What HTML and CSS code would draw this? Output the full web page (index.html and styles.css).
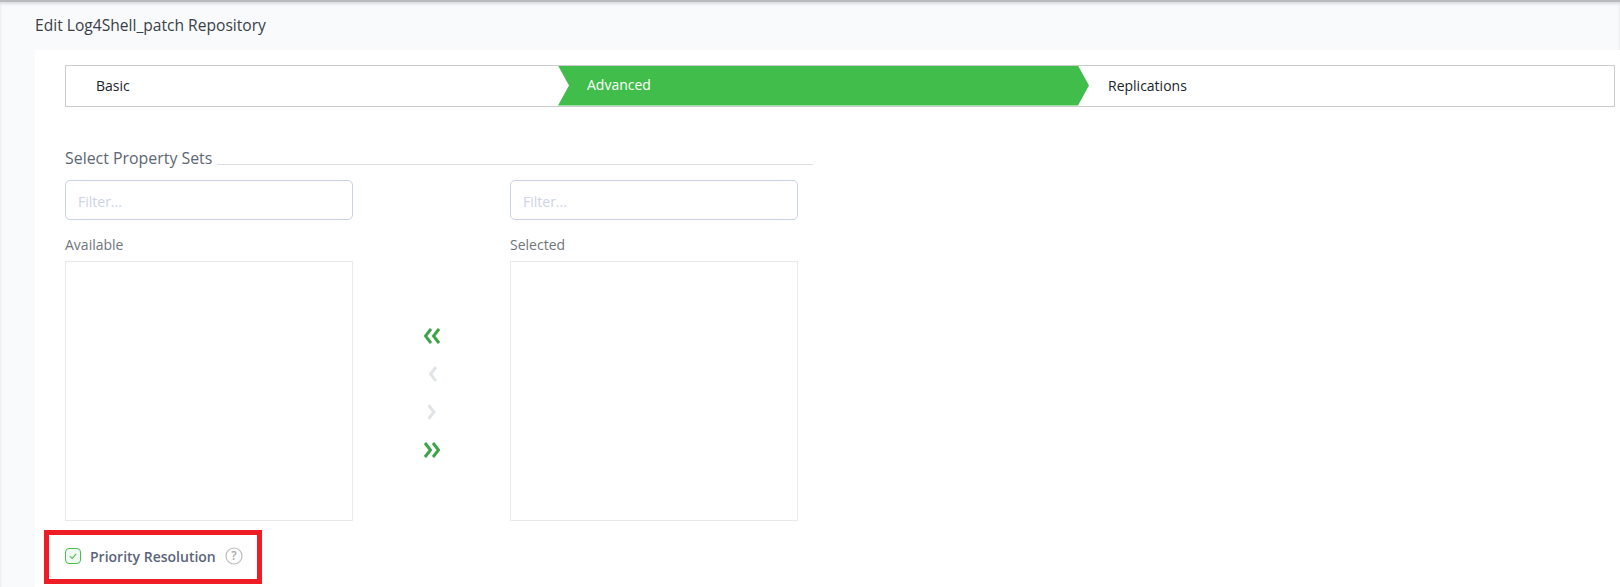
FILE: index.html
```html
<!DOCTYPE html>
<html lang="en">
<head>
<meta charset="utf-8">
<title>Edit Log4Shell_patch Repository</title>
<link rel="stylesheet" href="styles.css">
</head>
<body>
<div class="page">
  <h1 class="page-title">Edit Log4Shell_patch Repository</h1>
  <main class="panel">
    <div class="stepper">
      <div class="step step-first">Basic</div>
      <div class="step step-active">Advanced</div>
      <div class="step step-last">Replications</div>
    </div>
    <section class="property-sets">
      <div class="legend"><span class="legend-text">Select Property Sets</span><span class="legend-line"></span></div>
      <div class="picker">
        <div class="picker-col">
          <input class="filter" type="text" placeholder="Filter...">
          <div class="list-label">Available</div>
          <div class="list-box"></div>
        </div>
        <div class="arrows">
          <svg class="arrow" viewBox="0 0 16 16" width="16" height="16"><path class="on" d="M7 1 1.5 8 7 15M15 1 9.500 8 15 15"/></svg>
          <svg class="arrow" viewBox="0 0 16 16" width="16" height="16"><path class="off" d="M12 1 6.500 8 12 15"/></svg>
          <svg class="arrow" viewBox="0 0 16 16" width="16" height="16"><path class="off" d="M4.500 1 10 8 4.500 15"/></svg>
          <svg class="arrow" viewBox="0 0 16 16" width="16" height="16"><path class="on" d="M1 1 6.500 8 1 15M9 1 14.500 8 9 15"/></svg>
        </div>
        <div class="picker-col">
          <input class="filter" type="text" placeholder="Filter...">
          <div class="list-label">Selected</div>
          <div class="list-box"></div>
        </div>
      </div>
    </section>
    <div class="priority">
      <span class="checkbox"><svg viewBox="0 0 16 16" width="16" height="16"><path d="M4.8 8.2 7.2 10.4 11.2 5.8"/></svg></span>
      <span class="priority-label">Priority Resolution</span>
      <svg class="help" viewBox="0 0 18 18" width="18" height="18"><circle cx="9" cy="9" r="8"/><text x="9" y="13" text-anchor="middle">?</text></svg>
    </div>
    <div class="annotation"></div>
  </main>
</div>
</body>
</html>
```
FILE: styles.css
```css
* { box-sizing: border-box; }
html, body { margin: 0; height: 587px; overflow: hidden; }
body {
  background: #f9fafc;
  font-family: "Open Sans", "Liberation Sans", sans-serif;
  border-top: 2px solid #b8babe;
}
.page {
  padding-left: 35px;
  height: 585px;
  display: flex;
  flex-direction: column;
  box-shadow: inset 0 2px 3px rgba(0, 0, 0, 0.12);
}
.page-title {
  margin: 0;
  height: 48px;
  padding-top: 13px;
  font-size: 15.6px;
  line-height: 20px;
  font-weight: 400;
  color: #3a3f47;
}
.panel {
  position: relative;
  flex: 1;
  background: #fff;
  padding: 15px 5px 0 30px;
}
.stepper {
  display: flex;
  height: 42px;
  border: 1.5px solid #cccccc;
  font-size: 14px;
  color: #20242a;
}
.step { display: flex; align-items: center; padding-bottom: 2px; }
.step-first { width: 492px; padding-left: 30px; }
.step-active {
  width: 531px;
  padding-left: 29px;
  color: #fff;
  background: #40bd4a;
  clip-path: polygon(0 0, 520px 0, 100% 50%, 520px 100%, 0 100%, 11px 50%);
  height: 40px;
  align-self: flex-start;
  margin-top: -0.5px;
}
.step-last { flex: 1; padding-left: 19px; }
.property-sets { width: 748px; margin-top: 39px; }
.legend { display: flex; align-items: flex-end; height: 24px; }
.legend-text { font-size: 15.9px; line-height: 24px; color: #5d6673; }
.legend-line { flex: 1; margin: 0 0 5px 5px; border-bottom: 1px solid #dcdee4; }
.picker { display: grid; grid-template-columns: 288px 157px 288px; margin-top: 10px; }
.picker-col { display: flex; flex-direction: column; }
.filter {
  width: 100%;
  height: 40px;
  padding: 2px 12px 0;
  border: 1px solid #c9d1e4;
  border-radius: 5px;
  outline: none;
  background: #fff;
  font: 14px "Open Sans", "Liberation Sans", sans-serif;
}
.filter::placeholder { color: #ccd3e6; opacity: 1; }
.list-label { height: 41px; padding-top: 15px; font-size: 14px; line-height: 20px; color: #70757c; }
.list-box { height: 260px; border: 1px solid #e8e9ec; background: #fff; }
.arrows {
  display: flex;
  flex-direction: column;
  align-items: center;
  gap: 22px;
  padding-top: 148px;
}
.arrow { display: block; }
.arrow path { fill: none; stroke-width: 3; }
.arrow .on { stroke: #3ea34a; }
.arrow .off { stroke: #e1e5e8; }
.priority { display: flex; align-items: center; height: 18px; margin-top: 26px; }
.checkbox {
  width: 16px;
  height: 16px;
  border: 1px solid #45c050;
  border-radius: 4px;
  background: #f0f9f1;
  display: flex;
  align-items: center;
  justify-content: center;
  flex: none;
}
.checkbox svg { flex: none; }
.checkbox path { fill: none; stroke: #55bb60; stroke-width: 1.1; }
.priority-label { margin-left: 9px; font-size: 14px; font-weight: 600; color: #5b6579; }
.help { margin-left: 9px; }
.help circle { fill: none; stroke: #bcbcbc; stroke-width: 1.2; }
.help text { font-size: 12px; font-weight: 600; fill: #aaaaaa; font-family: "Open Sans", sans-serif; }
.annotation {
  position: absolute;
  left: 9px;
  top: 480px;
  width: 218px;
  height: 54px;
  border: 5px solid #ee1c25;
}
```
